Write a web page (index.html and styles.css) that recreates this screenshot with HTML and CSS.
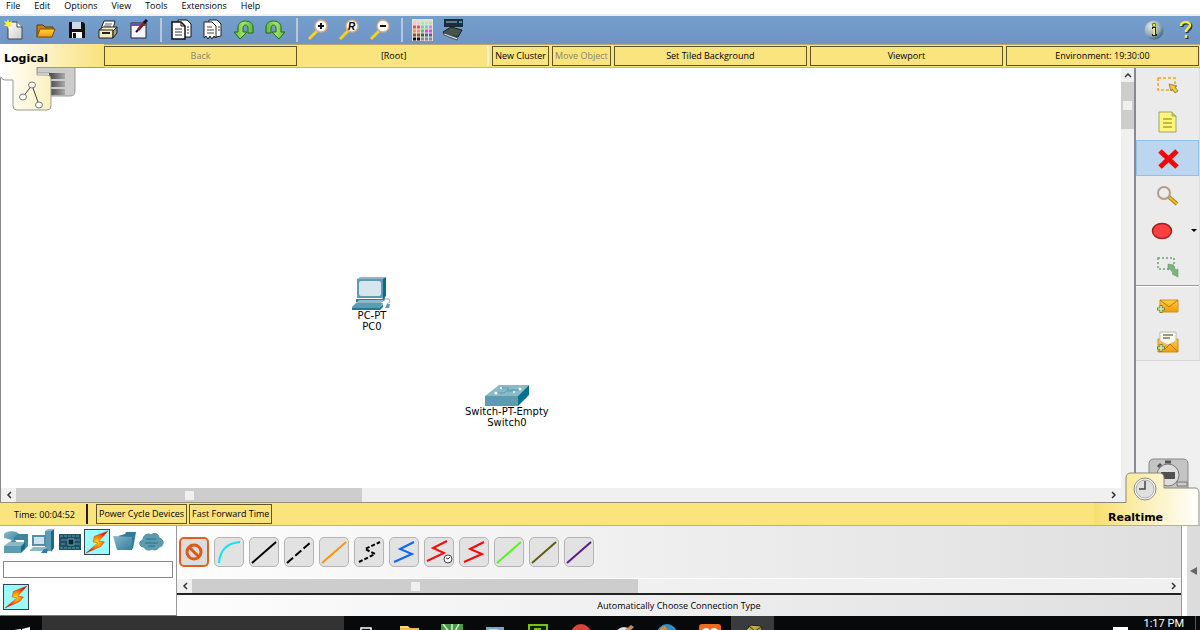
FILE: index.html
```
<!DOCTYPE html>
<html lang="en">
<head>
    <meta charset="UTF-8">
    <meta name="viewport" content="width=device-width, initial-scale=1.0">
    <title>Packet Tracer</title>
    <link rel="stylesheet" href="styles.css">
</head>
<body>
    <!-- Shared icon parts -->
    <svg class="defs" width="0" height="0" aria-hidden="true">
        <defs>
            <linearGradient id="paper" x1="0" y1="0" x2="1" y2="1">
                <stop offset="0" stop-color="#fff"/><stop offset="1" stop-color="#ccc"/>
            </linearGradient>
            <linearGradient id="gold" x1="0" y1="0" x2="0" y2="1">
                <stop offset="0" stop-color="#ffd23c"/><stop offset="1" stop-color="#f59a0b"/>
            </linearGradient>
            <linearGradient id="green" x1="0" y1="0" x2="1" y2="0">
                <stop offset="0" stop-color="#5cb936"/><stop offset="0.5" stop-color="#a5e36e"/><stop offset="1" stop-color="#5cb936"/>
            </linearGradient>
            <linearGradient id="teal" x1="0" y1="0" x2="1" y2="1">
                <stop offset="0" stop-color="#8ab9ca"/><stop offset="1" stop-color="#2f7f9a"/>
            </linearGradient>
            <linearGradient id="cream" x1="0" y1="0" x2="1" y2="0">
                <stop offset="0" stop-color="#fff"/><stop offset="1" stop-color="#f9e27c"/>
            </linearGradient>
            <linearGradient id="cream-back" x1="0" y1="0" x2="1" y2="0">
                <stop offset="0" stop-color="#f7e06f"/><stop offset="0.4" stop-color="#fbedaa"/><stop offset="1" stop-color="#fff"/>
            </linearGradient>
            <linearGradient id="rack" x1="0" y1="0" x2="1" y2="0">
                <stop offset="0" stop-color="#444"/><stop offset="1" stop-color="#aaa"/>
            </linearGradient>
            <radialGradient id="flame">
                <stop offset="0" stop-color="#ffe600"/><stop offset="0.5" stop-color="#ff7a00"/><stop offset="1" stop-color="#e01010"/>
            </radialGradient>
            <radialGradient id="ball" cx="0.35" cy="0.3" r="0.8">
                <stop offset="0" stop-color="#dfe9ee"/><stop offset="0.6" stop-color="#8fa9b8"/><stop offset="1" stop-color="#34566e"/>
            </radialGradient>
            <symbol id="bolt" viewBox="0 0 26 26">
                <path d="M25 1L10 7l-1 6 5 1L1 25l16-7 4-5-6-1z" fill="url(#flame)" stroke="#c83010" stroke-width="0.500"/>
            </symbol>
            <symbol id="glass" viewBox="0 0 22 22">
                <path d="M10 12L2 20" stroke="#f8d21c" stroke-width="3"/>
                <circle cx="14" cy="7" r="6" fill="#fff" stroke="#d8a888" stroke-width="1.500"/>
            </symbol>
        </defs>
    </svg>

    <nav class="menu">
        <a href="#">File</a>
        <a href="#">Edit</a>
        <a href="#">Options</a>
        <a href="#">View</a>
        <a href="#">Tools</a>
        <a href="#">Extensions</a>
        <a href="#">Help</a>
    </nav>

    <div class="toolbar">
        <button class="tool" aria-label="New">
            <svg width="22" height="22" viewBox="0 0 22 22"><path d="M4 3h9l5 5v12H4z" fill="url(#paper)" stroke="#444"/><path d="M13 3v5h5" fill="#fff" stroke="#444"/><path d="M4 0l1 3 3-1-1 3 2 2-3 0-1 3-2-3-3 0 2-2-2-3 3 1z" fill="#fdf03c"/></svg>
        </button>
        <button class="tool" aria-label="Open">
            <svg width="22" height="22" viewBox="0 0 22 22"><path d="M2 18V6h6l2 2h8v4" fill="#c98008" stroke="#5a3a00"/><path d="M2 18l3-8h15l-3 8z" fill="url(#gold)" stroke="#7a4d00"/></svg>
        </button>
        <button class="tool" aria-label="Save">
            <svg width="22" height="22" viewBox="0 0 22 22"><path d="M3 3h14l2 2v14H3z" fill="#111"/><path d="M6 3h9v7H6z" fill="#cfdbe8"/><path d="M6 13h10v6H6z" fill="#fff"/><path d="M7 14h3v5H7z" fill="#111"/></svg>
        </button>
        <button class="tool" aria-label="Print">
            <svg width="22" height="22" viewBox="0 0 22 22"><path d="M7 2h11l-2 8H4z" fill="#fff" stroke="#222"/><path d="M8 5h7M7 7h7" stroke="#666"/><path d="M2 11l4-3h14l-4 4z" fill="#f5f2c8" stroke="#222"/><path d="M2 11h14v8H2z" fill="#f4efb5" stroke="#222"/><path d="M16 12l4-4v6l-4 5z" fill="#a8a060" stroke="#222"/><path d="M5 14h8" stroke="#222" stroke-width="2"/></svg>
        </button>
        <button class="tool" aria-label="Activity Wizard">
            <svg width="22" height="22" viewBox="0 0 22 22"><path d="M3 4h15v15H3z" fill="#f6f6fa" stroke="#222"/><path d="M3 4h15v3H3z" fill="#6c4cc0"/><path d="M10 11l7-8" stroke="#7a2a18" stroke-width="3"/><path d="M16 4l3-3" stroke="#111" stroke-width="3"/><path d="M8 13l2-2" stroke="#111" stroke-width="2"/></svg>
        </button>
        <span class="divider"></span>
        <button class="tool" aria-label="Copy">
            <svg width="22" height="22" viewBox="0 0 22 22"><path d="M7 1h9l4 4v13H7z" fill="#fff" stroke="#111"/><path d="M1 3h9l4 4v13H1z" fill="#fff" stroke="#111" stroke-width="1.500"/><path d="M10 3v4h4" fill="none" stroke="#111"/><path d="M4 10h7M4 13h7M4 16h7M16 8h2M16 11h2M16 14h2" stroke="#333"/></svg>
        </button>
        <button class="tool" aria-label="Paste">
            <svg width="22" height="22" viewBox="0 0 22 22"><path d="M7 1h8l4 4v12l-5 1H7z" fill="#fff" stroke="#222"/><path d="M2 3h8l4 4v12l-2-2-2 3-2-3-2 3-2-3-2 2z" fill="#fff" stroke="#222"/><path d="M5 8h5M5 11h7M5 14h7M16 8h2M16 11h2" stroke="#444"/></svg>
        </button>
        <button class="tool" aria-label="Undo">
            <svg width="22" height="22" viewBox="0 0 22 22"><path d="M7 20L1 13h4V8c0-8 15-8 15 0v6h-5V9c0-4-5-4-5 0v4h4z" fill="url(#green)" stroke="#1f6d18"/></svg>
        </button>
        <button class="tool" aria-label="Redo">
            <svg width="22" height="22" viewBox="0 0 22 22"><path d="M15 20l6-7h-4V8C17 0 2 0 2 8v6h5V9c0-4 5-4 5 0v4H8z" fill="url(#green)" stroke="#1f6d18"/></svg>
        </button>
        <span class="divider"></span>
        <button class="tool" aria-label="Zoom In">
            <svg width="22" height="22" viewBox="0 0 22 22"><use href="#glass"/><path d="M11 7h6M14 4v6" stroke="#111" stroke-width="2"/></svg>
        </button>
        <button class="tool" aria-label="Zoom Reset">
            <svg width="22" height="22" viewBox="0 0 22 22"><use href="#glass"/><text x="10" y="11" class="zoom-letter">R</text></svg>
        </button>
        <button class="tool" aria-label="Zoom Out">
            <svg width="22" height="22" viewBox="0 0 22 22"><use href="#glass"/><path d="M11 7h6" stroke="#111" stroke-width="2"/></svg>
        </button>
        <span class="divider"></span>
        <button class="tool" aria-label="Drawing Palette">
            <svg width="22" height="22" viewBox="0 0 22 22"><path d="M0 0h21v22H0z" fill="#e4e0d4"/><g stroke-width="3" stroke-dasharray="3 1"><path d="M1 4h8" stroke="#f0c8d0"/><path d="M9 4h11" stroke="#b8e0b8"/><path d="M1 8h7" stroke="#e85050"/><path d="M9 8h7" stroke="#60d8b0"/><path d="M17 8h3" stroke="#b890f0"/><path d="M1 12h7" stroke="#f09070"/><path d="M9 12h3" stroke="#50c860"/><path d="M13 12h7" stroke="#d050e0"/><path d="M1 16h7" stroke="#905040"/><path d="M9 16h3" stroke="#306840"/><path d="M13 16h7" stroke="#5058c0"/><path d="M1 20h7" stroke="#111"/><path d="M9 20h11" stroke="#888"/></g></svg>
        </button>
        <button class="tool" aria-label="Custom Devices">
            <svg width="22" height="22" viewBox="0 0 22 22"><path d="M1 0h19v8H1z" fill="#1c2c38"/><path d="M3 3h11" stroke="#5d7c8c" stroke-width="2"/><path d="M16 3h3" stroke="#3a9ad0" stroke-width="2"/><path d="M0 13l8-5 11 3-4 7-14-3z" fill="#42564f" stroke="#17201d"/><path d="M1 14l14 5-1 2-13-5z" fill="#dfe4e4" stroke="#455"/></svg>
        </button>
        <span class="spacer"></span>
        <button class="tool" aria-label="Network Information">
            <svg width="22" height="22" viewBox="0 0 22 22"><circle cx="10" cy="11" r="9.500" fill="url(#ball)"/><circle cx="10" cy="6" r="2" fill="#222"/><path d="M8 9h3v7M8 16h5" fill="none" stroke="#222" stroke-width="2"/><circle cx="10" cy="6" r="1.500" fill="#f8f020"/><path d="M10 9v7" stroke="#f8f020" stroke-width="2"/></svg>
        </button>
        <button class="tool" aria-label="Contents">
            <svg width="22" height="22" viewBox="0 0 22 22" fill="none"><path d="M7 8c0-5 9-5 9-1 0 4-4 3-4 7M12 17v3" stroke="#223548" stroke-width="3"/><path d="M6 7c0-5 9-5 9-1 0 4-4 3-4 7M11 16v3" stroke="#f4ee30" stroke-width="2.500"/></svg>
        </button>
    </div>

    <div class="workbar">
        <div class="logical">
            <svg class="logical-shape" width="104" height="68" viewBox="0 0 104 68">
                <path d="M37 20v9h13v23h20q5 0 5-5V20z" fill="#ccc" stroke="#999"/>
                <path d="M49 29h16v6H49zM49 37h16v6H49zM49 45h16v6H49z" fill="url(#rack)"/>
                <path d="M0 0h104v23H37v8h10q4 0 4 4v27q0 4-4 4H17q-4 0-4-4V36H5q-5 0-5-5z" fill="url(#cream)"/>
                <path d="M37 23v8h10q4 0 4 4v27q0 4-4 4H17q-4 0-4-4V36H5q-3 0-4-3M37 23.500h67" fill="none" stroke="#999"/>
                <path d="M23 53l9-12 7 20" fill="none" stroke="#444"/>
                <g fill="#fff" stroke="#777"><ellipse cx="32" cy="41" rx="3.500" ry="3"/><ellipse cx="23" cy="53" rx="3.500" ry="3"/><ellipse cx="39" cy="61" rx="3.500" ry="3"/></g>
            </svg>
            <button class="mode">Logical</button>
        </div>
        <button class="bar-btn wide" disabled>Back</button>
        <span class="root">[Root]</span>
        <button class="bar-btn">New Cluster</button>
        <button class="bar-btn" disabled>Move Object</button>
        <button class="bar-btn wide">Set Tiled Background</button>
        <button class="bar-btn wide">Viewport</button>
        <button class="bar-btn wide">Environment: 19:30:00</button>
    </div>

    <main class="main">
        <div class="workspace">
            <div class="canvas-row">
                <div class="canvas">
                    <div class="device pc">
                        <svg width="40" height="34" viewBox="0 0 40 34"><path d="M5 3l3-2h26l-3 3z" fill="#8ab9ca"/><path d="M31 3l3-2v19l-3 3z" fill="#00708c"/><path d="M5 3h26v19H5z" fill="#5c9bb0"/><rect x="7" y="5" width="22" height="15" rx="2" fill="#d5e7ed"/><path d="M4 23h26l3-3v4l-3 2H4z" fill="#2b7c95"/><path d="M4 27l3-3h25l-4 4z" fill="#8ab9ca"/><path d="M0 31l4-4h27l-4 5H0z" fill="#5c9bb0"/><path d="M27 32l4-4v3l-3 3H0v-2z" fill="#28788f"/><path d="M32 23h5l1 3-3 2" fill="none" stroke="#9ab"/><path d="M33 32l2-4h3l-1 4z" fill="#5c9bb0"/></svg>
                        <span>PC-PT</span>
                        <span>PC0</span>
                    </div>
                    <div class="device switch">
                        <svg width="44" height="21" viewBox="0 0 44 21"><path d="M0 11L14 0h30L33 11z" fill="#8ab9ca"/><path d="M0 11h33v10H0z" fill="#5c9bb0"/><path d="M33 11L44 0v10L33 21z" fill="#00708c"/><path d="M16 3h8l-2 2h12M11 8h8l2-2h7" fill="none" stroke="#5c9bb0"/><g fill="#fff"><circle cx="16" cy="3" r="1"/><circle cx="35" cy="4" r="1.500"/><circle cx="11" cy="8" r="1.500"/><circle cx="29" cy="7" r="1"/></g></svg>
                        <span>Switch-PT-Empty</span>
                        <span>Switch0</span>
                    </div>
                </div>
                <div class="scroll-v">
                    <button class="arrow" aria-label="Scroll up"><svg width="8" height="6" viewBox="0 0 8 6"><path d="M1 5l3-3 3 3" fill="none" stroke="#333" stroke-width="1.500"/></svg></button>
                    <div class="thumb"></div>
                </div>
            </div>
            <div class="scroll-h">
                <button class="arrow" aria-label="Scroll left"><svg width="6" height="8" viewBox="0 0 6 8"><path d="M5 1L2 4l3 3" fill="none" stroke="#333" stroke-width="1.500"/></svg></button>
                <div class="thumb"></div>
                <span class="spacer"></span>
                <button class="arrow" aria-label="Scroll right"><svg width="6" height="8" viewBox="0 0 6 8"><path d="M1 1l3 3-3 3" fill="none" stroke="#333" stroke-width="1.500"/></svg></button>
                <span class="corner"></span>
            </div>
        </div>

        <aside class="sidebar">
            <div class="side-tools">
                <button aria-label="Select"><svg width="24" height="24" viewBox="0 0 24 24"><path d="M2 4h17v12H2z" fill="none" stroke="#f5a623" stroke-width="1.500" stroke-dasharray="3 2"/><path d="M13 10l8 2-2 1 3 4-3 2-3-4-1 2z" fill="#f0c83c" stroke="#a08840"/></svg></button>
                <button aria-label="Place Note"><svg width="24" height="24" viewBox="0 0 24 24"><path d="M3 2h13l4 4v16H3z" fill="#fbf77c" stroke="#a0a078"/><path d="M16 2v4h4" fill="#d8d040" stroke="#a0a078"/><path d="M7 9h9M7 13h9M7 17h9" stroke="#b0a828" stroke-width="1.500"/></svg></button>
                <button class="selected" aria-label="Delete"><svg width="24" height="24" viewBox="0 0 24 24"><path d="M4 5l17 16M21 5L4 21" stroke="#f00808" stroke-width="5"/></svg></button>
                <button aria-label="Inspect"><svg width="24" height="24" viewBox="0 0 24 24"><path d="M13 15l8 7" stroke="#a08020" stroke-width="4"/><path d="M13 15l8 7" stroke="#f0c020" stroke-width="2"/><circle cx="8" cy="11" r="6" fill="#ececec" stroke="#b49c88" stroke-width="2"/></svg></button>
                <button class="shape" aria-label="Draw Ellipse"><svg width="24" height="24" viewBox="0 0 24 24"><ellipse cx="11" cy="13" rx="9.500" ry="7.500" fill="#ff4040" stroke="#a02020" stroke-width="1.500"/></svg><span class="drop"></span></button>
                <button aria-label="Resize"><svg width="24" height="24" viewBox="0 0 24 24"><path d="M2 4h16v11H2z" fill="none" stroke="#6ba86a" stroke-width="1.500" stroke-dasharray="2 2"/><path d="M12 10l6 1-1 1 3 4 2-1v8l-6-3 1-1-3-4-2 1z" fill="#7fb47c" stroke="#689c68" stroke-width="0.600"/></svg></button>
                <hr>
                <button aria-label="Add Simple PDU"><svg width="24" height="24" viewBox="0 0 24 24"><path d="M4 6h18v12H4z" fill="url(#gold)" stroke="#d09020"/><path d="M4 6l9 7 9-7" fill="none" stroke="#b87010"/><path d="M5 11v8M1 15h8" stroke="#6a8448" stroke-width="3"/><path d="M5 12v6M2 15h6" stroke="#d8efa8" stroke-width="1.500"/></svg></button>
                <button aria-label="Add Complex PDU"><svg width="24" height="24" viewBox="0 0 24 24"><path d="M2 9h20v13H2z" fill="url(#gold)" stroke="#d09020"/><path d="M4 2h16v9l-8 4-8-4z" fill="#fffbe8" stroke="#bbb"/><path d="M7 5h10M7 8h7" stroke="#777" stroke-width="1.500"/><path d="M9 19l5-5 8 8" fill="none" stroke="#b87010"/><path d="M5 14v8M1 18h8" stroke="#6a8448" stroke-width="3"/><path d="M5 15v6M2 18h6" stroke="#d8efa8" stroke-width="1.500"/></svg></button>
            </div>
        </aside>
    </main>

    <div class="timebar">
        <span class="time">Time: 00:04:52</span>
        <button class="bar-btn">Power Cycle Devices</button>
        <button class="bar-btn">Fast Forward Time</button>
        <div class="realtime">
            <svg class="realtime-shape" width="106" height="67" viewBox="0 0 106 67">
                <path d="M55 31V6q0-5 5-5h29q5 0 5 5v25z" fill="#c4c4c4" stroke="#888"/>
                <g stroke="#777"><circle cx="74" cy="17" r="11" fill="#ddd"/><path d="M71 4h6" stroke="#555" stroke-width="3"/><path d="M64 9l3-3" stroke="#555" stroke-width="3"/><path d="M83 24h10v4H83z" fill="#ccc"/></g>
                <path d="M67 14h14v7H67z" fill="#505050"/>
                <path d="M0 67V45h32V20q0-5 5-5h28q5 0 5 5v10h31q5 0 5 5v32z" fill="url(#cream-back)"/>
                <path d="M0 44.500h32V20q0-5 5-5h28q5 0 5 5v10h31q4 0 4 5v32" fill="none" stroke="#8a8a7a"/>
                <circle cx="51" cy="31" r="11" fill="#fff" stroke="#888"/><circle cx="51" cy="31" r="9" fill="#e0e0e0" stroke="#aaa"/>
                <path d="M51 23v8h-6" fill="none" stroke="#444" stroke-width="1.500"/>
            </svg>
            <button class="mode">Realtime</button>
        </div>
    </div>

    <section class="bottom">
        <div class="device-box">
            <div class="kinds">
                <button aria-label="Network Devices"><svg width="26" height="26" viewBox="0 0 26 26"><path d="M1 6c0-5 15-5 15 0v2l-4 3 4 5H4l5-5-8-2z" fill="url(#teal)"/><path d="M11 8l4-3h10v12l-4 4V11H11z" fill="#3a86a0"/><path d="M1 17l5-4h16l-4 4z" fill="#8ab9ca"/><path d="M1 17h17v7H1z" fill="#5c9bb0"/><path d="M18 17l4-4v7l-4 4z" fill="#146c86"/></svg></button>
                <button aria-label="End Devices"><svg width="26" height="26" viewBox="0 0 26 26"><path d="M15 2h6v20h-6z" fill="#5c9bb0"/><path d="M21 2l3-2v19l-3 4z" fill="#146c86"/><path d="M15 2l3-2h6l-3 2z" fill="#8ab9ca"/><path d="M2 6h14v11H2z" fill="#4e91a8"/><path d="M4 8h10v7H4z" fill="#cfe2e9"/><path d="M0 21l3-3h14l-3 4H0z" fill="#8ab9ca"/><path d="M11 24l3-4h4l-1 4z" fill="#2f7f9a"/></svg></button>
                <button aria-label="Components"><svg width="26" height="26" viewBox="0 0 26 26"><path d="M2 5h22v16H2z" fill="#205064"/><path d="M3 7h20M3 19h20" stroke="#5c9bb0" stroke-dasharray="3 1"/><path d="M4 11h6M4 15h4M18 11h5M18 15h5" stroke="#407c92" stroke-width="1.500"/><path d="M11 10h6v6h-6z" fill="#123" stroke="#6aa"/></svg></button>
                <button class="on" aria-label="Connections"><svg width="24" height="24" viewBox="0 0 26 26"><use href="#bolt"/></svg></button>
                <button aria-label="Miscellaneous"><svg width="26" height="26" viewBox="0 0 26 26"><path d="M7 7l7-2 1-2h10l-3 17z" fill="#2f7f9a"/><path d="M2 7l19 1v13H6z" fill="url(#teal)"/></svg></button>
                <button aria-label="Multiuser Connection"><svg width="26" height="26" viewBox="0 0 26 26"><path d="M6 18C0 18 1 11 5 11 5 5 11 4 13 6c4-3 8-1 8 3 6 1 5 9 0 9-2 4-6 3-7 2-3 2-7 1-8-2z" fill="#5c9bb0" stroke="#4a8ca2"/><path d="M8 10h10M7 14h13M10 17h7" stroke="#286f88"/></svg></button>
            </div>
            <input type="text" class="filter" aria-label="Device filter">
            <button class="sub on" aria-label="Connections group"><svg width="24" height="24" viewBox="0 0 26 26"><use href="#bolt"/></svg></button>
        </div>

        <div class="palette">
            <div class="cables">
                <button class="auto" aria-label="Automatic"><svg width="28" height="28" viewBox="0 0 28 28"><circle cx="14" cy="14" r="7" fill="none" stroke="#dc5a18" stroke-width="3"/><path d="M9 9l10 10" stroke="#dc5a18" stroke-width="3"/></svg></button>
                <button aria-label="Console"><svg width="28" height="28" viewBox="0 0 28 28"><path d="M4 25C5 12 12 5 25 4" stroke="#12e4f4"/></svg></button>
                <button aria-label="Straight-Through"><svg width="28" height="28" viewBox="0 0 28 28"><path d="M2 25L26 4" stroke="#000"/></svg></button>
                <button aria-label="Cross-Over"><svg width="28" height="28" viewBox="0 0 28 28"><path d="M2 25L26 4" stroke="#000" stroke-dasharray="8 3"/></svg></button>
                <button aria-label="Fiber"><svg width="28" height="28" viewBox="0 0 28 28"><path d="M2 25L26 4" stroke="#ff9410"/></svg></button>
                <button aria-label="Phone"><svg width="28" height="28" viewBox="0 0 28 28"><path d="M4 24l16-8-10-5 15-7" stroke="#000" stroke-dasharray="4 2"/></svg></button>
                <button aria-label="Coaxial"><svg width="28" height="28" viewBox="0 0 28 28"><path d="M4 24l18-8-12-5 14-7" stroke="#0868ff"/></svg></button>
                <button aria-label="Serial DCE"><svg width="28" height="28" viewBox="0 0 28 28"><path d="M2 23l17-8-11-5 14-7" stroke="#f01010"/><circle cx="23" cy="21" r="4" fill="#fff" stroke="#444" stroke-width="1"/><path d="M21 20l2 1 2-2" stroke="#333" stroke-width="1"/></svg></button>
                <button aria-label="Serial DTE"><svg width="28" height="28" viewBox="0 0 28 28"><path d="M4 24l18-8-12-5 14-7" stroke="#f80808"/></svg></button>
                <button aria-label="Octal"><svg width="28" height="28" viewBox="0 0 28 28"><path d="M2 25L26 4" stroke="#50f820"/></svg></button>
                <button aria-label="IoE Custom"><svg width="28" height="28" viewBox="0 0 28 28"><path d="M2 25L26 4" stroke="#605c10"/></svg></button>
                <button aria-label="USB"><svg width="28" height="28" viewBox="0 0 28 28"><path d="M2 25L26 4" stroke="#581c90"/></svg></button>
            </div>
            <div class="scroll-h">
                <button class="arrow" aria-label="Scroll left"><svg width="6" height="8" viewBox="0 0 6 8"><path d="M5 1L2 4l3 3" fill="none" stroke="#333" stroke-width="1.500"/></svg></button>
                <div class="thumb long"></div>
                <span class="spacer"></span>
                <button class="arrow" aria-label="Scroll right"><svg width="6" height="8" viewBox="0 0 6 8"><path d="M1 1l3 3-3 3" fill="none" stroke="#333" stroke-width="1.500"/></svg></button>
            </div>
            <p class="hint">Automatically Choose Connection Type</p>
        </div>
        <button class="collapse" aria-label="Show event list"></button>
    </section>

    <footer class="taskbar">
        <span class="start"><svg width="16" height="16" viewBox="0 0 16 16"><path d="M0 3l7-1v6H0zM8 2l8-2v8H8zM0 9h7v6l-7-1zM8 9h8v7l-8-1z" fill="#fff"/></svg></span>
        <span class="search"></span>
        <span class="app"><svg width="22" height="22" viewBox="0 0 22 22"><path d="M6 4h10v12H6z" fill="none" stroke="#fff" stroke-width="1.500"/></svg></span>
        <span class="app"><svg width="22" height="22" viewBox="0 0 22 22"><path d="M2 2h8l2 2h9v16H2z" fill="#f7d774"/><path d="M2 5h19" stroke="#e0a820"/></svg></span>
        <span class="app"><svg width="22" height="22" viewBox="0 0 22 22"><path d="M0 0h22v20H0z" fill="#4a9a48"/><path d="M2 0l7 9M18 0l-5 9M11 0v8" stroke="#d8f4d0" stroke-width="1.500"/></svg></span>
        <span class="app"><svg width="22" height="22" viewBox="0 0 22 22"><path d="M2 3h18v15H2z" fill="#70a8cc"/><path d="M5 5h9v8H5z" fill="#c4dce8"/></svg></span>
        <span class="app"><svg width="22" height="22" viewBox="0 0 22 22"><path d="M2 1h18v18H2z" fill="#102008" stroke="#7cc010" stroke-width="2"/><path d="M7 5h6v8" fill="none" stroke="#7cc010" stroke-width="2"/></svg></span>
        <span class="app"><svg width="22" height="22" viewBox="0 0 22 22"><circle cx="11" cy="10" r="10" fill="#d84438"/></svg></span>
        <span class="app"><svg width="22" height="22" viewBox="0 0 22 22"><circle cx="11" cy="12" r="9" fill="#d8e4ec"/><path d="M12 6l6-5 3 2-6 6z" fill="#c88a50"/></svg></span>
        <span class="app"><svg width="22" height="22" viewBox="0 0 22 22"><circle cx="11" cy="10" r="10" fill="#2890d0"/><path d="M2 14C2 5 6 2 9 2l3 5-4 7z" fill="#f08818"/></svg></span>
        <span class="app"><svg width="22" height="22" viewBox="0 0 22 22"><rect width="22" height="20" rx="3" fill="#ec6c20"/><circle cx="7" cy="8" r="4" fill="#fff"/><circle cx="15" cy="8" r="4" fill="#fff"/></svg></span>
        <span class="app active"><svg width="22" height="22" viewBox="0 0 22 22"><path d="M3 7l6-6 10 1 1 6-10 5z" fill="#c0a848" stroke="#222"/><path d="M8 3l5 4 6-4" fill="none" stroke="#333"/><path d="M1 8l6-3 4 6-6 6z" fill="#a8c8a0"/></svg></span>
        <span class="spacer"></span>
        <span class="tray"></span>
        <span class="clock">1:17 PM</span>
        <span class="edge"></span>
    </footer>
</body>
</html>
```
FILE: styles.css
```
* {
    margin: 0;
    padding: 0;
    box-sizing: border-box;
}

body {
    display: flex;
    flex-direction: column;
    height: 100vh;
    overflow: hidden;
    background: #f0f0f0;
    color: #000;
    font-family: "Open Sans", "Noto Sans", sans-serif;
    font-size: 9px;
    line-height: 12px;
}

button {
    font: inherit;
    color: inherit;
    background: none;
    border: none;
    cursor: pointer;
}

svg {
    display: block;
}

.defs {
    position: absolute;
}

.spacer {
    flex: 1;
}

/* Menu and toolbar */
.menu {
    display: flex;
    gap: 14px;
    height: 16px;
    padding: 0 6px;
    background: #fff;
    border-bottom: 2px solid #f0f0f0;
}

.menu a {
    color: #000;
    text-decoration: none;
}

.toolbar {
    display: flex;
    align-items: center;
    gap: 9px;
    height: 28px;
    padding: 0 3px 0 4px;
    background: linear-gradient(#749fcb, #7094c5);
}

.divider {
    width: 2px;
    height: 24px;
    margin-left: 1px;
    background: #b9c7dc;
}

.zoom-letter {
    font-family: "Liberation Sans", sans-serif;
    font-size: 10px;
    font-weight: bold;
    font-style: italic;
}

/* Yellow bars */
.workbar,
.timebar {
    display: flex;
    position: relative;
    z-index: 1;
    background: #fae47e;
}

.workbar {
    gap: 3px;
    height: 24px;
    padding: 1px 1px 1px 0;
    border-top: 1px solid #b9a96c;
    border-bottom: 1px solid #bdb79a;
}

.bar-btn {
    padding: 0 2px;
    border: 1px solid #5e5424;
    white-space: nowrap;
}

.bar-btn:disabled {
    color: #8b866c;
}

.wide,
.root {
    flex: 1;
}

.root {
    padding-top: 4px;
    text-align: center;
    border-right: 2px solid #f4efdc;
}

.mode {
    position: relative;
    font-family: "DejaVu Sans", sans-serif;
    font-size: 11px;
    font-weight: bold;
    color: #000;
}

.logical {
    width: 101px;
    padding: 7px 4px 0;
}

.logical-shape {
    position: absolute;
    top: -1px;
    left: 0;
}

/* Workspace */
.main {
    display: flex;
    flex: 1;
    min-height: 0;
}

.workspace {
    display: flex;
    flex: 1;
    flex-direction: column;
    border-left: 1px solid #888;
    border-right: 2px solid #8b8794;
}

.canvas-row {
    display: flex;
    flex: 1;
}

.canvas {
    position: relative;
    flex: 1;
    background: #fff;
}

.device {
    display: flex;
    position: absolute;
    flex-direction: column;
    align-items: center;
    font-family: "DejaVu Sans", sans-serif;
    font-size: 10px;
    line-height: 11px;
}

.pc {
    top: 208px;
    left: 351px;
}

.switch {
    top: 317px;
    left: 464px;
}

.scroll-v {
    display: flex;
    flex-direction: column;
    width: 13px;
    background: #f0f0f0;
}

.scroll-h {
    display: flex;
    height: 14px;
    background: #f0f0f0;
}

.arrow {
    display: flex;
    align-items: center;
    justify-content: center;
    width: 15px;
    height: 14px;
}

.scroll-v .arrow {
    width: 13px;
}

.corner {
    width: 13px;
}

.thumb {
    display: flex;
    align-items: center;
    justify-content: center;
    width: 346px;
    background: #cdcdcd;
}

.thumb.long {
    width: 446px;
}

.scroll-v .thumb {
    width: 13px;
    height: 47px;
}

.thumb::after {
    content: "";
    width: 9px;
    height: 9px;
    background: #f0f0f0;
}

/* Right hand tools */
.sidebar {
    width: 64px;
}

.side-tools {
    display: flex;
    flex-direction: column;
    background: #ebebeb;
    border-right: 1px solid #ddd;
    border-bottom: 1px solid #d8d8d8;
}

.side-tools button {
    display: flex;
    align-items: center;
    justify-content: center;
    height: 36px;
    border: 1px solid transparent;
}

.side-tools .selected {
    background: #bbd6ee;
    border-color: #92c0e8;
}

.side-tools .shape {
    gap: 16px;
    padding-left: 12px;
}

.drop {
    border: 3px solid transparent;
    border-top-color: #000;
    border-bottom: none;
}

.side-tools hr {
    margin: 1px 0;
    border: none;
    border-top: 1px solid #999;
    border-bottom: 1px solid #fff;
}

/* Time bar */
.timebar {
    gap: 2px;
    height: 24px;
    padding: 1px 0;
    border-top: 1px solid #98927a;
    border-bottom: 1px solid #b5b09c;
}

.time {
    width: 88px;
    margin-right: 6px;
    padding: 5px 0 0 14px;
    border-right: 2px solid #222;
}

.realtime {
    display: flex;
    align-items: flex-end;
    width: 106px;
    margin-left: auto;
    padding-left: 14px;
}

.realtime-shape {
    position: absolute;
    right: 0;
    bottom: 0;
}

/* Device and cable boxes */
.bottom {
    display: flex;
    height: 90px;
    background: #fff;
}

.device-box {
    display: flex;
    flex-direction: column;
    align-items: flex-start;
    gap: 6px;
    width: 177px;
    padding: 3px;
    border-right: 1px solid #999;
    border-bottom: 1px solid #777;
}

.kinds {
    display: flex;
    gap: 1px;
}

.kinds button {
    width: 26px;
}

.on {
    width: 26px;
    height: 26px;
    background: #9cfcfc;
    border: 1px solid #345;
}

.filter {
    width: 100%;
    height: 17px;
    border: 1px solid #888;
    background: #fff;
}

.palette {
    display: flex;
    flex: 1;
    flex-direction: column;
    border-right: 1px solid #999;
    background: linear-gradient(90deg, #fdfdfd, #dfdfdf);
}

.cables {
    display: flex;
    flex: 1;
    align-items: center;
    gap: 5px;
    padding: 0 0 1px 2px;
    border-bottom: 1px solid #fff;
}

.cables button {
    width: 30px;
    height: 30px;
    border: 1px solid #b4b4b4;
    border-radius: 5px;
    background: #e2e2e2;
}

.cables svg {
    fill: none;
    stroke-width: 2px;
}

.cables .auto {
    border: 2px solid #e06020;
    background: #dcdcdc;
}

.auto svg {
    margin: -1px;
}

.hint {
    height: 23px;
    padding-top: 5px;
    text-align: center;
    border-top: 2px solid #222;
}

.collapse {
    display: flex;
    align-items: center;
    justify-content: center;
    width: 13px;
    margin-left: 5px;
    background: #dcdcdc;
}

.collapse::before {
    content: "";
    border: 4px solid transparent;
    border-right: 7px solid #666;
    border-left: none;
}

/* Windows task bar */
.taskbar {
    display: flex;
    height: 14px;
    overflow: hidden;
    background: #08090a;
    color: #fff;
}

.start {
    width: 42px;
    padding: 11px 14px 0;
}

.search {
    width: 302px;
    background: #333;
}

.app {
    display: flex;
    justify-content: center;
    width: 43px;
    padding-top: 8px;
}

.app.active {
    background: #3a3b3c;
}

.tray {
    width: 15px;
    margin: 11px 16px 0 0;
    background: #fff;
}

.clock {
    padding-top: 2px;
    font-family: Roboto, sans-serif;
    font-size: 11px;
}

.edge {
    width: 1px;
    margin: 0 4px 0 11px;
    background: #555;
}
```
